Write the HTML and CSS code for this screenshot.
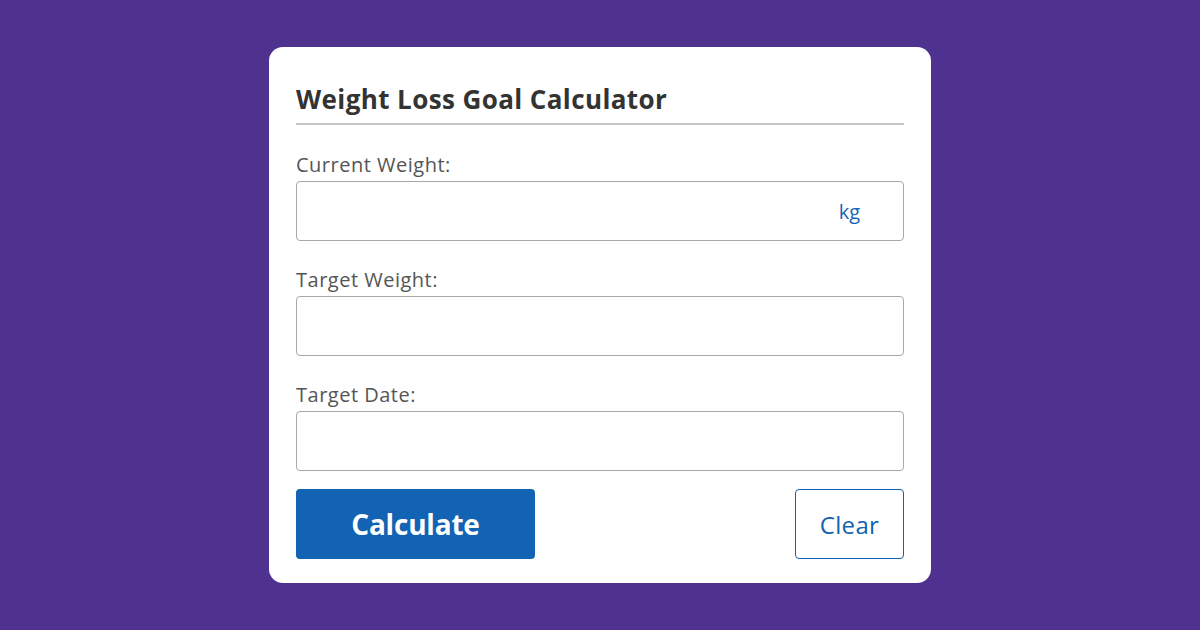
FILE: index.html
```html
<!DOCTYPE html>
<html>
<head>
<meta charset="utf-8">
<link rel="stylesheet" href="styles.css">
</head>
<body>
<main class="card">
  <h1 class="title">Weight Loss Goal Calculator</h1>
  <div class="field">
    <label class="label">Current Weight:</label>
    <div class="input"><span class="unit">kg</span></div>
  </div>
  <div class="field">
    <label class="label">Target Weight:</label>
    <div class="input"></div>
  </div>
  <div class="field">
    <label class="label">Target Date:</label>
    <div class="input"></div>
  </div>
  <div class="actions">
    <button class="btn btn-primary">Calculate</button>
    <button class="btn btn-secondary">Clear</button>
  </div>
</main>
</body>
</html>
```
FILE: styles.css
```css
html, body {
  margin: 0;
  padding: 0;
}
body {
  width: 1200px;
  height: 630px;
  background: #4f3190;
  display: flex;
  justify-content: center;
  align-items: flex-start;
  font-family: "Open Sans", "Noto Sans", sans-serif;
}
.card {
  margin-top: 47px;
  height: 536px;
  box-sizing: border-box;
  width: 662px;
  padding: 27px 27px 0 27px;
  background: #fff;
  border-radius: 14px;
  display: flex;
  flex-direction: column;
}
.title {
  margin: 0;
  font-size: 26px;
  font-weight: 700;
  color: #333;
  line-height: 50px;
  height: 49px;
  border-bottom: 2px solid #c4c4c4;
  letter-spacing: 0.4px;
}
.field {
  display: flex;
  flex-direction: column;
}
.field:first-of-type {
  margin-top: 26px;
}
.field + .field {
  margin-top: 25px;
}
.label {
  font-size: 20px;
  line-height: 28px;
  color: #555;
  margin-top: 0;
  margin-bottom: 2px;
  letter-spacing: 0.5px;
}
.input {
  height: 60px;
  box-sizing: border-box;
  border: 1px solid #a8a8a8;
  border-radius: 4px;
  display: flex;
  align-items: center;
  justify-content: flex-end;
  padding-right: 43px;
}
.unit {
  color: #1565b8;
  font-size: 20px;
}
.actions {
  margin-top: 18px;
  display: flex;
  justify-content: space-between;
}
.btn {
  height: 70px;
  border-radius: 4px;
  font-family: inherit;
  cursor: pointer;
}
.btn-primary {
  width: 239px;
  background: #1263b3;
  border: none;
  color: #fff;
  font-size: 28px;
  font-weight: 700;
  letter-spacing: -0.2px;
}
.btn-secondary {
  width: 109px;
  background: #fff;
  border: 1px solid #1263b3;
  color: #1263b3;
  font-size: 24px;
  letter-spacing: 0.3px;
}
```
